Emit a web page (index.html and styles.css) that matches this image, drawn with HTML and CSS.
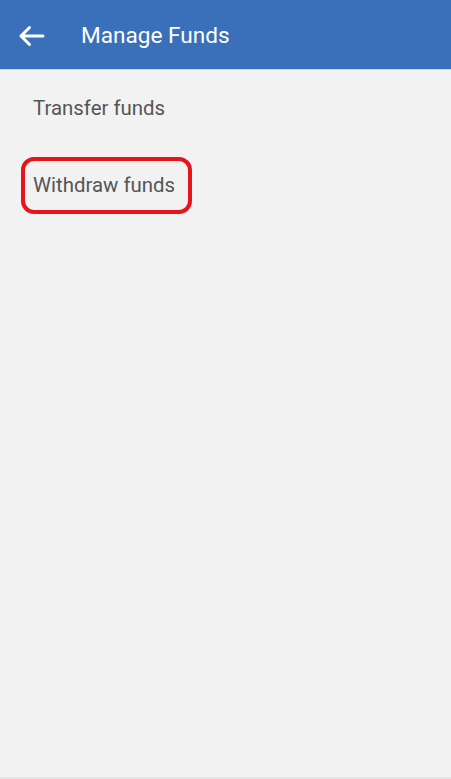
FILE: index.html
```html
<!DOCTYPE html>
<html lang="en">
<head>
  <meta charset="UTF-8">
  <title>Manage Funds</title>
  <link rel="stylesheet" href="styles.css">
</head>
<body>
  <header class="app-bar">
    <button class="back-btn" aria-label="Back">
      <svg width="27" height="22" viewBox="0 0 27 22">
        <path d="M25 11H3M11.5 2.5L3 11l8.5 8.5" fill="none" stroke="#fff" stroke-width="3" stroke-linecap="round" stroke-linejoin="round"/>
      </svg>
    </button>
    <h1 class="app-title">Manage Funds</h1>
  </header>

  <main class="menu">
    <div class="menu-item">Transfer funds</div>
    <div class="menu-item highlighted">Withdraw funds</div>
  </main>
</body>
</html>
```

FILE: styles.css
```css
html, body {
  height: 100%;
  margin: 0;
  padding: 0;
}

body {
  font-family: Roboto, 'Noto Sans', sans-serif;
  background-color: #f2f2f2;
  display: flex;
  flex-direction: column;
}

.app-bar {
  height: 69px;
  flex-shrink: 0;
  background-color: #3a6fb9;
  border-bottom: 1px solid #c9d6ea;
  display: flex;
  align-items: center;
  padding-left: 18px;
}

.back-btn {
  background: none;
  border: none;
  padding: 0;
  width: 27px;
  height: 22px;
  margin-top: 2px;
  display: flex;
  align-items: center;
  cursor: pointer;
}

.app-title {
  margin: 2px 0 0 36px;
  font-size: 22.6px;
  font-weight: 400;
  color: #fff;
}

.menu {
  flex: 1;
  padding: 10px 0 0 21px;
  border-bottom: 2px solid #e6e6e0;
}

.menu-item {
  display: flex;
  align-items: center;
  width: 171px;
  height: 57px;
  padding: 0 8px 2px;
  margin-bottom: 20px;
  font-size: 20.4px;
  color: #555;
  border: 4px solid transparent;
  border-radius: 13px;
  box-sizing: border-box;
}

.highlighted {
  border-color: #e8141c;
}
```
